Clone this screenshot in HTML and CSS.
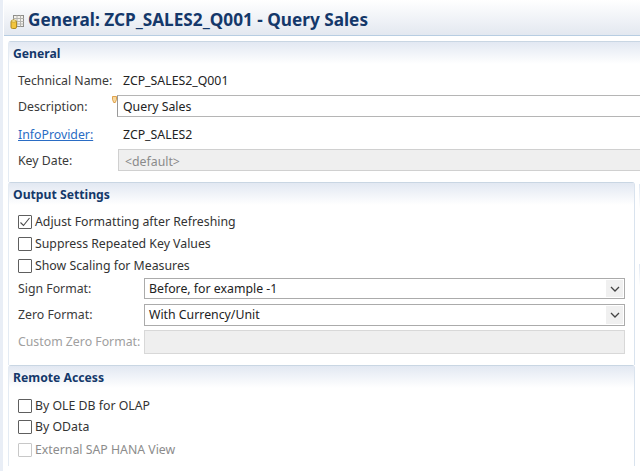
FILE: index.html
```html
<!DOCTYPE html>
<html lang="en">
<head>
<meta charset="utf-8">
<title>General: ZCP_SALES2_Q001 - Query Sales</title>
<link rel="stylesheet" href="styles.css">
</head>
<body>
<div class="editor">
  <header class="title-bar">
    <svg class="title-icon" width="16" height="16" viewBox="0 0 16 16">
      <rect x="3.5" y="2.5" width="10" height="11" fill="#f3f1ec" stroke="#8e8e8a"/>
      <path d="M3.5 5.5h10M3.5 8.5h10M3.5 11h10M7 2.5v11M10.500 2.500v11" stroke="#b4b4b0" fill="none"/>
      <rect x="1" y="7.500" width="5.500" height="8" rx="1.500" fill="#f2c53d" stroke="#b08a20"/>
      <ellipse cx="3.750" cy="8" rx="2.400" ry="1.200" fill="#fbe88e" stroke="#b08a20" stroke-width=".6"/>
    </svg>
    <h1>General: ZCP_SALES2_Q001 - Query Sales</h1>
  </header>

  <section class="panel panel-general">
    <h2>General</h2>
    <div class="rows">
      <div class="row row-plain"><span class="label">Technical Name:</span><span class="value">ZCP_SALES2_Q001</span></div>
      <div class="row row-desc"><span class="label">Description:</span>
        <svg class="hint" width="5" height="7" viewBox="0 0 5 7"><path d="M.5 .5h4v3l-1.200 3h-1.600l-1.200-3z" fill="#f7d9a0" stroke="#d9902f" stroke-width=".8"/></svg>
        <div class="field field-edit">Query Sales</div></div>
      <div class="row row-info"><a class="label link" href="#">InfoProvider:</a><span class="value">ZCP_SALES2</span></div>
      <div class="row row-key"><span class="label">Key Date:</span><div class="field field-disabled">&lt;default&gt;</div></div>
    </div>
  </section>

  <section class="panel panel-output">
    <h2>Output Settings</h2>
    <div class="checks">
      <label class="check"><span class="box"><svg width="12" height="12" viewBox="0 0 12 12"><path d="M1.500 6.500l3 3 6-7.500" fill="none" stroke="#4a4a4a" stroke-width="1.100"/></svg></span>Adjust Formatting after Refreshing</label>
      <label class="check"><span class="box"></span>Suppress Repeated Key Values</label>
      <label class="check"><span class="box"></span>Show Scaling for Measures</label>
    </div>
    <div class="forms">
      <div class="form-row"><span class="form-label">Sign Format:</span><div class="select select-sign">Before, for example -1<span class="arrow"><svg width="10" height="6" viewBox="0 0 10 6"><path d="M1 1l4 4 4-4" fill="none" stroke="#444" stroke-width="1.300"/></svg></span></div></div>
      <div class="form-row form-row-zero"><span class="form-label">Zero Format:</span><div class="select">With Currency/Unit<span class="arrow"><svg width="10" height="6" viewBox="0 0 10 6"><path d="M1 1l4 4 4-4" fill="none" stroke="#444" stroke-width="1.300"/></svg></span></div></div>
      <div class="form-row"><span class="form-label muted">Custom Zero Format:</span><div class="select select-disabled"></div></div>
    </div>
  </section>

  <section class="panel panel-remote">
    <h2>Remote Access</h2>
    <div class="checks">
      <label class="check"><span class="box"></span>By OLE DB for OLAP</label>
      <label class="check"><span class="box"></span>By OData</label>
      <label class="check check-disabled"><span class="box"></span>External SAP HANA View</label>
    </div>
  </section>
</div>
</body>
</html>
```

FILE: styles.css
```css
html, body { margin: 0; height: 100%; background: #fff; }
body { overflow: hidden; font: 12.3px/16px "Noto Sans", "Open Sans", sans-serif; color: #333; }
.editor { width: 640px; height: 471px; box-sizing: border-box; overflow: hidden; border-left: 3px solid #e9eef6; padding-left: 1px; }
.title-bar { display: flex; align-items: center; height: 35px; background: linear-gradient(#fff, #e3e8f0); border-bottom: 1px solid #b7cde2; padding-left: 6px; gap: 2px; }
.title-icon { flex: none; margin-top: 7px; }
h1 { margin: 4px 0 0; font-size: 17.2px; line-height: 24px; font-weight: 700; color: #14386a; white-space: nowrap; }
.panel { position: relative; margin-left: 4px; border-top: 1px solid #c9d6e3; border-left: 1px solid #e4ebf3; border-top-left-radius: 3px; }
.panel h2 { margin: 0; height: 22px; padding-left: 4px; font-size: 12.2px; line-height: 23px; font-weight: 700; color: #14386a; background: linear-gradient(#e2e8f2, #fff); border: 0; }
.panel-general { margin-top: 5px; width: 700px; height: 140px; }
.panel-output { width: 625px; height: 182px; border-right: 1px solid #d9e3ee; border-top-right-radius: 3px; }
.panel-remote { width: 625px; height: 100px; border-right: 1px solid #d9e3ee; border-top-right-radius: 3px; }
.panel-output::before, .panel-output::after { content: ""; position: absolute; left: 630px; width: 2px; background: linear-gradient(#dfe7f2, #fff); }
.panel-output::before { top: 1px; height: 25px; }
.panel-output::after { top: 81px; height: 22px; }
.rows { padding-top: 7px; }
.row { display: flex; align-items: center; position: relative; padding-left: 9px; }
.row-plain { height: 20px; }
.row-desc { height: 22px; margin-top: 5px; }
.row-info { height: 20px; margin-top: 7px; }
.row-key { height: 22px; margin-top: 5px; }
.label { width: 105px; flex: none; color: #3a3a3a; }
.link { color: #2a6cc4; text-decoration: underline; }
.value { color: #222; }
.hint { position: absolute; left: 103px; top: 0; }
.field { flex: 1; box-sizing: border-box; height: 22px; line-height: 20px; align-self: flex-start; margin-top: -1px; padding-top: 1px; }
.field-edit { border: 1px solid #b5b5b5; border-left-color: #999; color: #222; margin-left: -6px; padding-left: 5px; }
.field-disabled { border: 1px solid #d0d0d0; background: #efefef; color: #8a8a8a; margin-left: -5px; padding-left: 6px; padding-top: 2px; }
.checks { display: flex; flex-direction: column; gap: 6px; padding: 9px 0 0 9px; }
.panel-remote .checks { gap: 5px; padding-top: 10px; }
.check { display: flex; align-items: center; height: 16px; gap: 3px; color: #333; }
.box { box-sizing: border-box; width: 14px; height: 14px; border: 1px solid #5e5e5e; background: #fff; display: flex; align-items: center; justify-content: center; border-radius: 1px; }
.check-disabled { color: #8c8c8c; margin-top: 2px; }
.check-disabled .box { border-color: #c8c8c8; }
.forms { display: flex; flex-direction: column; gap: 4px; padding: 4px 0 0 9px; }
.form-row { display: flex; align-items: center; }
.form-row-zero { margin-top: 1px; }
.form-label { width: 126px; flex: none; color: #3a3a3a; white-space: nowrap; }
.muted { color: #a0a0a0; }
.select { box-sizing: border-box; width: 481px; height: 22px; border: 1px solid #ababab; padding-left: 4px; line-height: 20px; color: #222; display: flex; justify-content: space-between; }
.select-sign { height: 21px; }
.select-sign .arrow { height: 17px; }
.arrow { width: 17px; height: 18px; margin: 1px; background: #f0f0f0; display: flex; align-items: center; justify-content: center; }
.select-disabled { height: 24px; background: #efefef; border-color: #d8d8d8; }
```
